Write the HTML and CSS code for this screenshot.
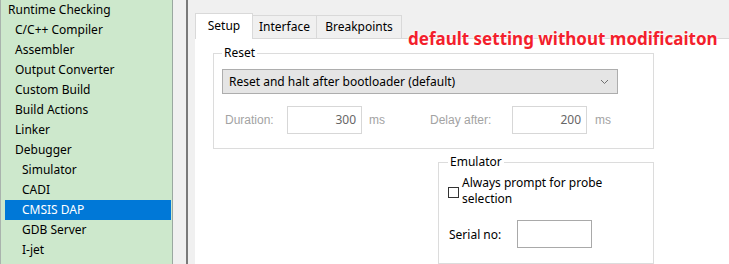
FILE: index.html
```html
<!DOCTYPE html>
<html lang="en">
<head>
  <meta charset="UTF-8" />
  <title>Options - CMSIS DAP</title>
  <link rel="stylesheet" href="styles.css">
</head>
<body>
  <div class="window">
    <ul class="tree">
      <li class="lvl0">Runtime Checking</li>
      <li class="lvl1">C/C++ Compiler</li>
      <li class="lvl1">Assembler</li>
      <li class="lvl1">Output Converter</li>
      <li class="lvl1">Custom Build</li>
      <li class="lvl1">Build Actions</li>
      <li class="lvl1">Linker</li>
      <li class="lvl1">Debugger</li>
      <li class="lvl2">Simulator</li>
      <li class="lvl2">CADI</li>
      <li class="lvl2 selected">CMSIS DAP</li>
      <li class="lvl2">GDB Server</li>
      <li class="lvl2">I-jet</li>
    </ul>

    <div class="splitter"><div class="grip"></div></div>

    <div class="panel">
      <div class="tabs">
        <div class="tab active tab-setup">Setup</div>
        <div class="tab tab-interface">Interface</div>
        <div class="tab tab-breakpoints">Breakpoints</div>
      </div>

      <div class="page">
        <fieldset class="group reset">
          <legend>Reset</legend>
          <div class="combo">
            <span>Reset and halt after bootloader (default)</span>
            <svg class="chevron" width="9" height="6" viewBox="0 0 9 6">
              <path d="M1 1 L4.5 4.5 L8 1" fill="none" stroke="#707070" stroke-width="1"/>
            </svg>
          </div>
          <div class="timing">
            <span class="dim label-duration">Duration:</span>
            <div class="field disabled">300</div>
            <span class="dim unit">ms</span>
            <span class="dim label-delay">Delay after:</span>
            <div class="field disabled">200</div>
            <span class="dim unit last">ms</span>
          </div>
        </fieldset>

        <fieldset class="group emulator">
          <legend>Emulator</legend>
          <label class="check">
            <span class="box"></span>
            <span>Always prompt for probe selection</span>
          </label>
          <div class="serial">
            <span class="serial-label">Serial no:</span>
            <div class="field"></div>
          </div>
        </fieldset>
      </div>
    </div>

    <div class="note">default setting without modificaiton</div>
  </div>
</body>
</html>
```

FILE: styles.css
```css
body {
  margin: 0;
  font-family: "Noto Sans", "Open Sans", sans-serif;
  font-size: 12px;
  color: #000;
  background: #f0f0f0;
}
.window {
  position: relative;
  display: flex;
  width: 729px;
  height: 264px;
  overflow: hidden;
}

/* category tree */
.tree {
  list-style: none;
  margin: 0;
  padding: 0 1px 0 2px;
  width: 168px;
  flex: none;
  background: #cde8cc;
  border-left: 1px solid #a9b3ad;
  border-right: 1px solid #9aa8a0;
}
.tree li {
  height: 20px;
  line-height: 20px;
  white-space: nowrap;
}
.lvl0 { padding-left: 5px; }
.lvl1 { padding-left: 12px; }
.lvl2 { padding-left: 19px; }
.tree .selected {
  background: #0078d7;
  color: #fff;
  margin-left: 2px;
  padding-left: 17px;
}

.splitter {
  width: 22px;
  flex: none;
  display: flex;
  padding-left: 13px;
  box-sizing: border-box;
}
.grip {
  width: 2px;
  background: #7a7a7a;
}

/* tab control */
.panel {
  flex: 1;
  display: flex;
  flex-direction: column;
}
.tabs {
  display: flex;
  align-items: flex-end;
  height: 38px;
  padding-top: 13px;
  box-sizing: border-box;
}
.tab {
  height: 23px;
  line-height: 22px;
  text-align: center;
  background: #f0f0f0;
  border: 1px solid #d9d9d9;
  border-bottom: none;
  box-sizing: border-box;
  margin-left: -1px;
}
.tab-setup { width: 58px; margin-left: 0; }
.tab-interface { width: 65px; }
.tab-breakpoints { width: 86px; }
.tab.active {
  height: 26px;
  line-height: 24px;
  background: #fff;
  position: relative;
  margin-bottom: -1px;
  z-index: 1;
}
.page {
  flex: 1;
  background: #fff;
  border-top: 1px solid #d9d9d9;
  padding: 6px 0 0 18px;
}

/* group boxes */
.group {
  margin: 0;
  padding: 0;
  border: 1px solid #dcdcdc;
}
.group legend {
  margin-left: 0;
  padding: 0 2px;
  line-height: 16px;
}
.reset {
  width: 441px;
  height: 104px;
  box-sizing: border-box;
  padding: 8px 0 0 8px;
}
.combo {
  display: flex;
  align-items: center;
  justify-content: space-between;
  width: 396px;
  height: 25px;
  padding: 0 6px 0 6px;
  box-sizing: border-box;
  background: #e5e5e5;
  border: 1px solid #adadad;
}
.chevron { margin-right: 2px; }

.timing {
  display: flex;
  align-items: center;
  margin-top: 12px;
  font-family: "Liberation Sans", Arial, sans-serif;
}
.dim { color: #a3a3a3; }
.label-duration { margin-left: 3px; width: 62px; }
.unit { margin-left: 7px; width: 61px; }
.unit.last { margin-left: 8px; width: auto; }
.label-delay { width: 82px; }
.field {
  width: 75px;
  height: 28px;
  flex: none;
  box-sizing: border-box;
  border: 1px solid #a9a9a9;
  background: #fff;
  text-align: right;
  padding-right: 5px;
  line-height: 26px;
  font-family: "Noto Sans", sans-serif;
}
.field.disabled {
  border-color: #d7d7d7;
  color: #666;
}

.emulator {
  width: 216px;
  height: 110px;
  box-sizing: border-box;
  margin: 5px 0 0 225px;
  padding: 5px 0 0 9px;
}
.check {
  display: flex;
  align-items: center;
  line-height: 16px;
}
.check .box {
  width: 9px;
  height: 9px;
  border: 1px solid #333;
  flex: none;
  margin-right: 3px;
  margin-top: 2px;
}
.check span:last-child { width: 150px; }
.serial {
  display: flex;
  align-items: center;
  margin-top: 13px;
  padding-left: 1px;
}
.serial-label { width: 68px; }

/* annotation drawn over the dialog */
.note {
  position: absolute;
  left: 408px;
  top: 27px;
  font-family: "Noto Sans", sans-serif;
  font-weight: bold;
  font-size: 17px;
  color: #f31f2d;
  text-shadow: 0 0 2px #fff, 0 0 3px #fff;
  white-space: nowrap;
}
```
